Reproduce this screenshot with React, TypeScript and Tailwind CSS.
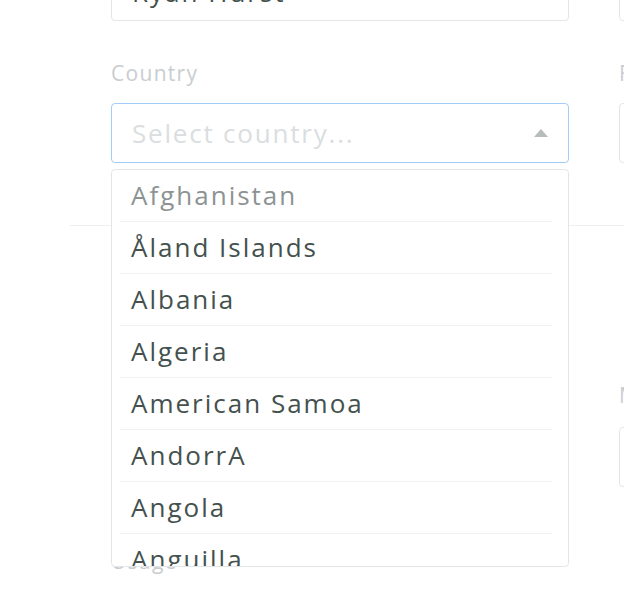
const countries = [
  "Afghanistan",
  "Åland Islands",
  "Albania",
  "Algeria",
  "American Samoa",
  "AndorrA",
  "Angola",
  "Anguilla",
  "Anguilla",
];

function CountryMenu() {
  return (
    <div className="absolute left-0 top-[66px] w-full h-[398px] overflow-hidden rounded-[4px] border border-[#e3e6e9] bg-white">
      {countries.map((name, i) => (
        <div
          key={i}
          className="ml-2 mr-4 h-[52px] border-b border-[#f0f1f2] flex items-center pl-[11px]"
        >
          <span
            className={
              "text-[26px] leading-[34px] tracking-[2px] -mt-[2px] " +
              (i === 0 ? "text-[#8c9392]" : "text-[#44514e]")
            }
          >
            {name}
          </span>
        </div>
      ))}
    </div>
  );
}

export default function App() {
  return (
    <div
      className="h-[602px] w-[624px] overflow-hidden bg-white"
      style={{ fontFamily: "'Open Sans', sans-serif" }}
    >
      <div className="-mt-[39px] ml-[70px] w-[700px]">
        <div className="grid grid-cols-[458px_458px] gap-x-[50px] pl-[41px] pb-[62px]">
          <div className="h-[60px] rounded-[4px] border border-[#e3e6e9] flex items-center px-5 pt-[2px] text-[26px] tracking-[2px] text-[#44514e]">
            Ryan Hurst
          </div>
          <div className="h-[60px] rounded-[4px] border border-[#e3e6e9]" />

          <div className="mt-[38px]">
            <div className="text-[21px] leading-[28px] tracking-[1.3px] text-[#c9cdcf]">Country</div>
            <div className="relative mt-4">
              <div className="h-[60px] rounded-[4px] border border-[#a3ccf6] flex items-center justify-between pl-5 pr-5">
                <span className="text-[26px] leading-[34px] tracking-[1.8px] text-[#dadee0]">Select country...</span>
                <svg width="14" height="8" viewBox="0 0 14 8">
                  <path d="M0 8 L7 0 L14 8 Z" fill="#b7bcbc" />
                </svg>
              </div>
              <CountryMenu />
            </div>
          </div>
          <div className="mt-[38px]">
            <div className="text-[21px] leading-[28px] tracking-[1.3px] text-[#c9cdcf]">First name</div>
            <div className="mt-4 h-[60px] rounded-[4px] border border-[#e3e6e9]" />
          </div>
        </div>

        <div className="border-t border-[#eceef0] grid grid-cols-[458px_458px] gap-x-[50px] pl-[41px]">
          <div className="pt-[321px]">
            <div className="text-[21px] leading-[28px] tracking-[1.3px] text-[#c9cdcf]">Usage</div>
          </div>
          <div className="pt-[155px]">
            <div className="text-[21px] leading-[28px] tracking-[1.3px] text-[#c9cdcf]">Message</div>
            <div className="mt-[18px] h-[60px] rounded-[4px] border border-[#e3e6e9]" />
          </div>
        </div>
      </div>
    </div>
  );
}
